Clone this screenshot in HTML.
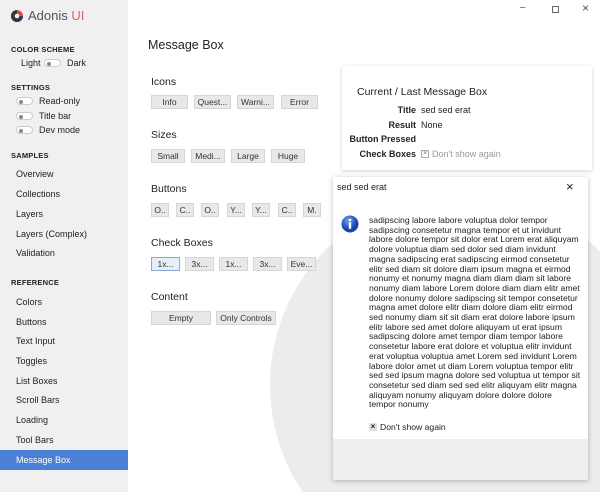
<!DOCTYPE html>
<html><head><style>
*{margin:0;padding:0;box-sizing:border-box}
html,body{width:600px;height:492px;overflow:hidden}
body{position:relative;background:#fff;font-family:"Liberation Sans",sans-serif;color:#222}
.side{position:absolute;left:0;top:0;width:128px;height:492px;background:#f0f0f0}
.a{position:absolute;font-size:9px;white-space:nowrap}
.h{font-weight:bold;font-size:7.5px;letter-spacing:0.2px}
.tg{position:absolute;width:17px;height:8px;border:1px solid #ccc;border-radius:5px;background:#fff}
.tg:after{content:"";position:absolute;left:2px;top:1.5px;width:4px;height:4px;border-radius:50%;background:#888}
.b{position:absolute;height:14px;background:#e8e8e8;border:1px solid #d6d6d6;font-size:8.5px;text-align:center;line-height:12px;color:#333}
.sec{position:absolute;font-size:10.5px;color:#222}
</style></head><body>
<svg style="position:absolute;left:0;top:0" width="600" height="492">
<circle cx="462" cy="385" r="192" fill="#ececec"/>
<circle cx="462" cy="385" r="95" fill="#fff"/>
</svg>
<div class="side">
<svg style="position:absolute;left:10px;top:9px" width="14" height="14" viewBox="0 0 14 14"><circle cx="7" cy="7" r="6" fill="#e04b2e"/><path d="M7 1a6 6 0 1 0 6 6H7z" fill="#2b3a47"/><circle cx="7" cy="7" r="2.3" fill="#f0f0f0"/></svg>
<div class="a" style="left:28px;top:8px;font-size:13px;color:#4a5560">Adonis <span style="color:#d06a5a">UI</span></div>
<div class="a h" style="left:11px;top:45px">COLOR SCHEME</div>
<div class="a" style="left:21px;top:58px">Light</div><div class="tg" style="left:44px;top:59px"></div><div class="a" style="left:67px;top:58px">Dark</div>
<div class="a h" style="left:11px;top:83px">SETTINGS</div>
<div class="tg" style="left:16px;top:97px"></div><div class="a" style="left:39px;top:96px">Read-only</div>
<div class="tg" style="left:16px;top:112px"></div><div class="a" style="left:39px;top:111px">Title bar</div>
<div class="tg" style="left:16px;top:126px"></div><div class="a" style="left:39px;top:125px">Dev mode</div>
<div class="a h" style="left:11px;top:151px">SAMPLES</div>
<div class="a" style="left:16px;top:169px">Overview</div>
<div class="a" style="left:16px;top:189px">Collections</div>
<div class="a" style="left:16px;top:209px">Layers</div>
<div class="a" style="left:16px;top:229px">Layers (Complex)</div>
<div class="a" style="left:16px;top:248px">Validation</div>
<div class="a h" style="left:11px;top:278px">REFERENCE</div>
<div class="a" style="left:16px;top:297px">Colors</div>
<div class="a" style="left:16px;top:317px">Buttons</div>
<div class="a" style="left:16px;top:336px">Text Input</div>
<div class="a" style="left:16px;top:356px">Toggles</div>
<div class="a" style="left:16px;top:376px">List Boxes</div>
<div class="a" style="left:16px;top:395px">Scroll Bars</div>
<div class="a" style="left:16px;top:415px">Loading</div>
<div class="a" style="left:16px;top:435px">Tool Bars</div>
<div style="position:absolute;left:0;top:450px;width:128px;height:20px;background:#4a7fd4"></div>
<div class="a" style="left:16px;top:455px;color:#fff">Message Box</div>
</div>
<div class="a" style="left:520px;top:2px;font-size:10px;color:#555">&#8211;</div>
<div style="position:absolute;left:552px;top:6px;width:7px;height:7px;border:1px solid #666"></div>
<div class="a" style="left:582px;top:1px;font-size:12px;color:#555">×</div>
<div class="sec" style="left:148px;top:38px;font-size:12.5px">Message Box</div>
<div class="sec" style="left:151px;top:76px">Icons</div>
<div class="b" style="left:151px;top:95px;width:37px">Info</div><div class="b" style="left:194px;top:95px;width:37px">Quest...</div><div class="b" style="left:237px;top:95px;width:37px">Warni...</div><div class="b" style="left:281px;top:95px;width:37px">Error</div>
<div class="sec" style="left:151px;top:129px">Sizes</div>
<div class="b" style="left:151px;top:149px;width:34px">Small</div><div class="b" style="left:191px;top:149px;width:34px">Medi...</div><div class="b" style="left:231px;top:149px;width:34px">Large</div><div class="b" style="left:271px;top:149px;width:34px">Huge</div>
<div class="sec" style="left:151px;top:183px">Buttons</div>
<div class="b" style="left:151px;top:203px;width:18px">O..</div><div class="b" style="left:176px;top:203px;width:18px">C..</div><div class="b" style="left:201px;top:203px;width:18px">O..</div><div class="b" style="left:227px;top:203px;width:18px">Y...</div><div class="b" style="left:252px;top:203px;width:18px">Y...</div><div class="b" style="left:278px;top:203px;width:18px">C..</div><div class="b" style="left:303px;top:203px;width:18px">M.</div>
<div class="sec" style="left:151px;top:237px">Check Boxes</div>
<div class="b" style="left:151px;top:257px;width:29px;background:#e6eef8;border-color:#8aa8d0">1x...</div><div class="b" style="left:185px;top:257px;width:29px">3x...</div><div class="b" style="left:219px;top:257px;width:29px">1x...</div><div class="b" style="left:253px;top:257px;width:29px">3x...</div><div class="b" style="left:287px;top:257px;width:29px">Eve...</div>
<div class="sec" style="left:151px;top:291px">Content</div>
<div class="b" style="left:151px;top:311px;width:60px">Empty</div><div class="b" style="left:216px;top:311px;width:60px">Only Controls</div>
<div style="position:absolute;left:342px;top:66px;width:250px;height:104px;background:#fff;box-shadow:0 1px 4px rgba(0,0,0,.18)"></div>
<div class="sec" style="left:357px;top:86px;font-size:10.5px">Current / Last Message Box</div>
<div class="a" style="left:342px;width:74px;text-align:right;top:105px;font-weight:bold">Title</div><div class="a" style="left:421px;top:105px">sed sed erat</div>
<div class="a" style="left:342px;width:74px;text-align:right;top:120px;font-weight:bold">Result</div><div class="a" style="left:421px;top:120px">None</div>
<div class="a" style="left:342px;width:74px;text-align:right;top:134px;font-weight:bold">Button Pressed</div>
<div class="a" style="left:342px;width:74px;text-align:right;top:149px;font-weight:bold">Check Boxes</div>
<div style="position:absolute;left:421px;top:150px;width:8px;height:8px;border:1px solid #aaa;font-size:7px;line-height:6px;text-align:center;color:#666">×</div><div class="a" style="left:432px;top:149px;color:#999">Don't show again</div>
<div style="position:absolute;left:333px;top:177px;width:255px;height:303px;background:#fff;box-shadow:0 1px 5px rgba(0,0,0,.25);overflow:hidden">
<div class="a" style="left:4px;top:5px">sed sed erat</div>
<div class="a" style="left:233px;top:2px;font-size:13px">×</div>
<svg style="position:absolute;left:8px;top:38px" width="18" height="18"><defs><radialGradient id="g" cx="40%" cy="30%"><stop offset="0" stop-color="#6fa3f0"/><stop offset="1" stop-color="#1a45a8"/></radialGradient></defs><circle cx="9" cy="9" r="8.5" fill="url(#g)"/><circle cx="9" cy="5" r="1.4" fill="#fff"/><rect x="7.8" y="7.3" width="2.4" height="6.5" fill="#fff"/></svg>
<div class="a" style="left:36px;top:39px;font-size:8.6px;line-height:9.7px">sadipscing labore labore voluptua dolor tempor<br>sadipscing consetetur magna tempor et ut invidunt<br>labore dolore tempor sit dolor erat Lorem erat aliquyam<br>dolore voluptua diam sed dolor sed diam invidunt<br>magna sadipscing erat sadipscing eirmod consetetur<br>elitr sed diam sit dolore diam ipsum magna et eirmod<br>nonumy et nonumy magna diam diam diam sit labore<br>nonumy diam labore Lorem dolore diam diam elitr amet<br>dolore nonumy dolore sadipscing sit tempor consetetur<br>magna amet dolore elitr diam dolore diam elitr eirmod<br>sed nonumy diam sit sit diam erat dolore labore ipsum<br>elitr labore sed amet dolore aliquyam ut erat ipsum<br>sadipscing dolore amet tempor diam tempor labore<br>consetetur labore erat dolore et voluptua elitr invidunt<br>erat voluptua voluptua amet Lorem sed invidunt Lorem<br>labore dolor amet ut diam Lorem voluptua tempor elitr<br>sed sed ipsum magna dolore sed voluptua ut tempor sit<br>consetetur sed diam sed sed elitr aliquyam elitr magna<br>aliquyam nonumy aliquyam dolore dolore dolore<br>tempor nonumy</div>
<div style="position:absolute;left:36px;top:246px;width:8px;height:8px;background:#e0e0e0;font-size:8px;line-height:8px;text-align:center;font-weight:bold">×</div>
<div class="a" style="left:47px;top:245px;font-size:8.6px">Don't show again</div>
<div style="position:absolute;left:0;top:262px;width:255px;height:41px;background:#efefef"></div>
</div>
</body></html>
